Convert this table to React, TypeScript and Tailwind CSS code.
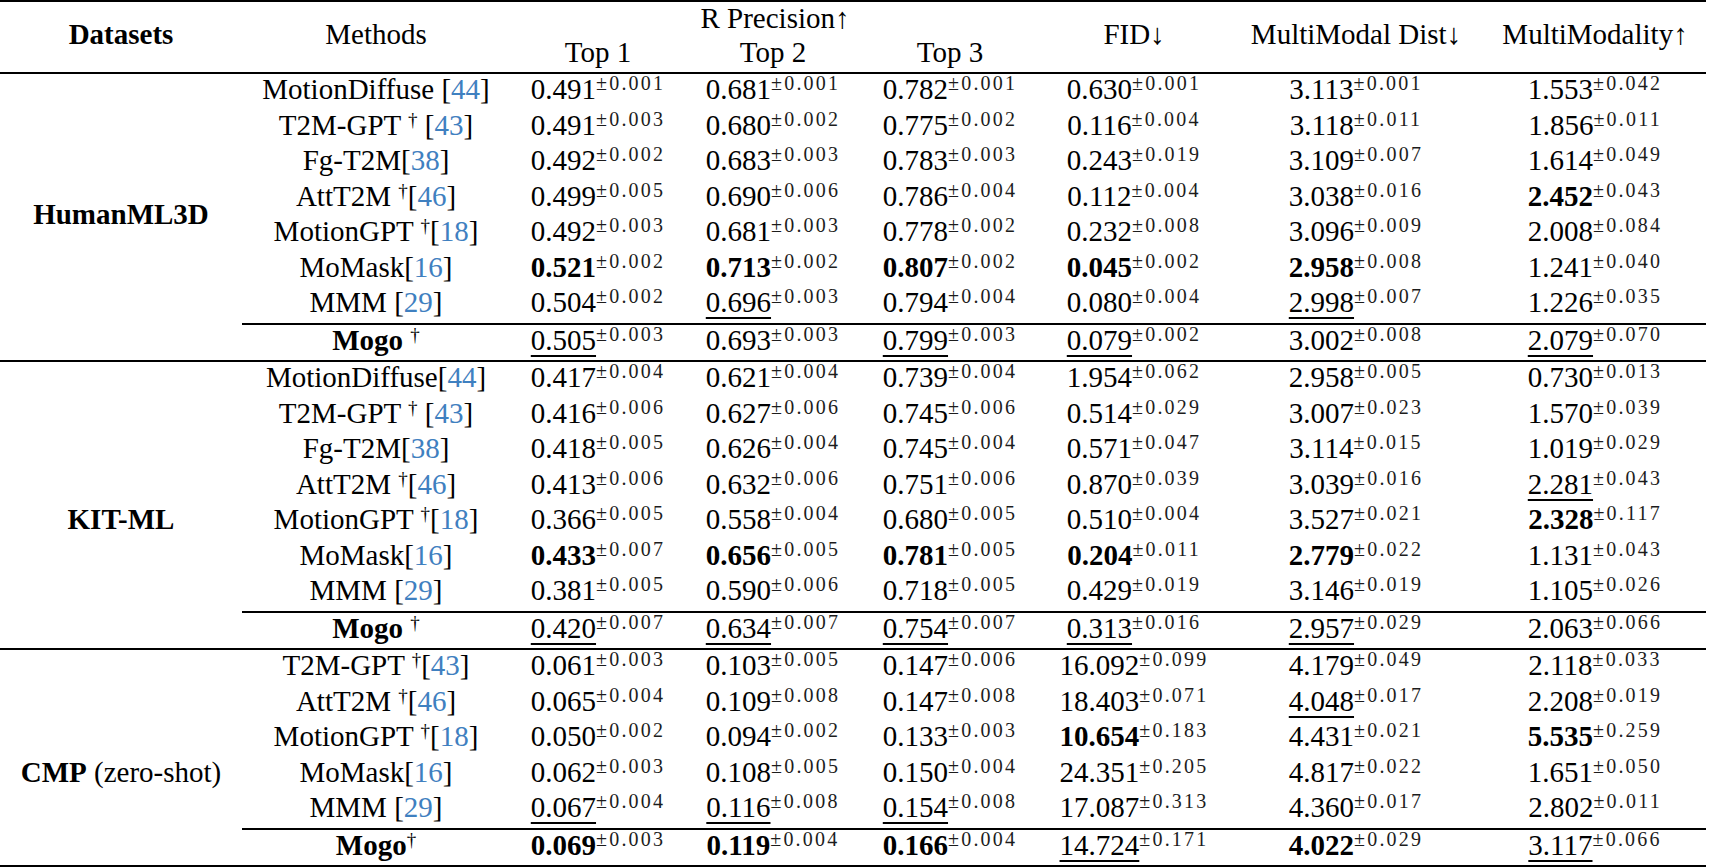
import clsx from "clsx";

// value strings: "main|std|style" where style is "" | "b" (bold) | "u" (underline)
type Row = { method: string; vals: string[]; mogo?: boolean };
type Section = { label: React.ReactNode; labelPad: string; rows: Row[] };

const SECTIONS: Section[] = [
  {
    label: <span className="font-bold">HumanML3D</span>,
    labelPad: "",
    rows: [
      { method: "MotionDiffuse [44]", vals: ["0.491|0.001", "0.681|0.001", "0.782|0.001", "0.630|0.001", "3.113|0.001", "1.553|0.042"] },
      { method: "T2M-GPT † [43]", vals: ["0.491|0.003", "0.680|0.002", "0.775|0.002", "0.116|0.004", "3.118|0.011", "1.856|0.011"] },
      { method: "Fg-T2M[38]", vals: ["0.492|0.002", "0.683|0.003", "0.783|0.003", "0.243|0.019", "3.109|0.007", "1.614|0.049"] },
      { method: "AttT2M †[46]", vals: ["0.499|0.005", "0.690|0.006", "0.786|0.004", "0.112|0.004", "3.038|0.016", "2.452|0.043|b"] },
      { method: "MotionGPT †[18]", vals: ["0.492|0.003", "0.681|0.003", "0.778|0.002", "0.232|0.008", "3.096|0.009", "2.008|0.084"] },
      { method: "MoMask[16]", vals: ["0.521|0.002|b", "0.713|0.002|b", "0.807|0.002|b", "0.045|0.002|b", "2.958|0.008|b", "1.241|0.040"] },
      { method: "MMM [29]", vals: ["0.504|0.002", "0.696|0.003|u", "0.794|0.004", "0.080|0.004", "2.998|0.007|u", "1.226|0.035"] },
      { method: "Mogo †", mogo: true, vals: ["0.505|0.003|u", "0.693|0.003", "0.799|0.003|u", "0.079|0.002|u", "3.002|0.008", "2.079|0.070|u"] },
    ],
  },
  {
    label: <span className="font-bold">KIT-ML</span>,
    labelPad: "pt-[35px]",
    rows: [
      { method: "MotionDiffuse[44]", vals: ["0.417|0.004", "0.621|0.004", "0.739|0.004", "1.954|0.062", "2.958|0.005", "0.730|0.013"] },
      { method: "T2M-GPT † [43]", vals: ["0.416|0.006", "0.627|0.006", "0.745|0.006", "0.514|0.029", "3.007|0.023", "1.570|0.039"] },
      { method: "Fg-T2M[38]", vals: ["0.418|0.005", "0.626|0.004", "0.745|0.004", "0.571|0.047", "3.114|0.015", "1.019|0.029"] },
      { method: "AttT2M †[46]", vals: ["0.413|0.006", "0.632|0.006", "0.751|0.006", "0.870|0.039", "3.039|0.016", "2.281|0.043|u"] },
      { method: "MotionGPT †[18]", vals: ["0.366|0.005", "0.558|0.004", "0.680|0.005", "0.510|0.004", "3.527|0.021", "2.328|0.117|b"] },
      { method: "MoMask[16]", vals: ["0.433|0.007|b", "0.656|0.005|b", "0.781|0.005|b", "0.204|0.011|b", "2.779|0.022|b", "1.131|0.043"] },
      { method: "MMM [29]", vals: ["0.381|0.005", "0.590|0.006", "0.718|0.005", "0.429|0.019", "3.146|0.019", "1.105|0.026"] },
      { method: "Mogo †", mogo: true, vals: ["0.420|0.007|u", "0.634|0.007|u", "0.754|0.007|u", "0.313|0.016|u", "2.957|0.029|u", "2.063|0.066"] },
    ],
  },
  {
    label: (
      <span>
        <span className="font-bold">CMP</span> (zero-shot)
      </span>
    ),
    labelPad: "pt-[35px]",
    rows: [
      { method: "T2M-GPT †[43]", vals: ["0.061|0.003", "0.103|0.005", "0.147|0.006", "16.092|0.099", "4.179|0.049", "2.118|0.033"] },
      { method: "AttT2M †[46]", vals: ["0.065|0.004", "0.109|0.008", "0.147|0.008", "18.403|0.071", "4.048|0.017|u", "2.208|0.019"] },
      { method: "MotionGPT †[18]", vals: ["0.050|0.002", "0.094|0.002", "0.133|0.003", "10.654|0.183|b", "4.431|0.021", "5.535|0.259|b"] },
      { method: "MoMask[16]", vals: ["0.062|0.003", "0.108|0.005", "0.150|0.004", "24.351|0.205", "4.817|0.022", "1.651|0.050"] },
      { method: "MMM [29]", vals: ["0.067|0.004|u", "0.116|0.008|u", "0.154|0.008|u", "17.087|0.313", "4.360|0.017", "2.802|0.011"] },
      { method: "Mogo†", mogo: true, vals: ["0.069|0.003|b", "0.119|0.004|b", "0.166|0.004|b", "14.724|0.171|u", "4.022|0.029|b", "3.117|0.066|u"] },
    ],
  },
];

const ROW_COLS = "grid grid-cols-[268px_176px_174px_180px_188px_256px_222px]";

const Val = ({ v }: { v: string }) => {
  const [main, sd, style] = v.split("|");
  return (
    <span className="whitespace-nowrap">
      <span
        className={clsx(
          style === "b" && "font-bold",
          style === "u" && "underline decoration-[1.5px] underline-offset-[5px]"
        )}
      >
        {main}
      </span>
      <span className="relative -top-[9px] text-[20px] tracking-[2.2px] text-[#1c1c1c]">±{sd}</span>
    </span>
  );
};

const Method = ({ text, bold }: { text: string; bold?: boolean }) => {
  const parts = text.split(/(†|\[\d+\])/).filter(Boolean);
  return (
    <span className="whitespace-pre">
      {parts.map((p, i) => {
        if (p === "†")
          return (
            <span key={i} className="relative -top-[9px] text-[19px]">
              †
            </span>
          );
        if (p.startsWith("["))
          return (
            <span key={i}>
              [<span className="text-[#3f80c0]">{p.slice(1, -1)}</span>]
            </span>
          );
        return (
          <span key={i} className={clsx(bold && "font-bold")}>
            {p}
          </span>
        );
      })}
    </span>
  );
};

const DataRow = ({ row }: { row: Row }) => (
  <div className={clsx(ROW_COLS, "h-[35.5px] pb-[5px] text-center leading-[30.5px]")}>
    <div>
      <Method text={row.method} bold={row.mogo} />
    </div>
    {row.vals.map((v, i) => (
      <div key={i}>
        <Val v={v} />
      </div>
    ))}
  </div>
);

export default function App() {
  return (
    <div className="w-[1706px] bg-white font-['Liberation_Serif','Times_New_Roman',serif] text-[29px] leading-normal text-black">
      {/* top rule */}
      <div className="h-[2px] bg-black" />
      <div className="flex h-[70px]">
        <div className="flex w-[242px] items-center justify-center font-bold pb-[4px]">Datasets</div>
        <div className="flex w-[268px] items-center justify-center pb-[4px]">Methods</div>
        <div className="flex w-[530px] flex-col">
          <div className="flex h-[34px] items-center justify-center">R Precision↑</div>
          <div className="h-[1.5px] bg-black" />
          <div className="flex flex-1 items-start text-center -mt-[5px]">
            <div className="w-[176px]">Top 1</div>
            <div className="w-[174px]">Top 2</div>
            <div className="w-[180px]">Top 3</div>
          </div>
        </div>
        <div className="flex w-[188px] items-center justify-center pb-[4px]">FID↓</div>
        <div className="flex w-[256px] items-center justify-center pb-[4px]">MultiModal Dist↓</div>
        <div className="flex w-[222px] items-center justify-center pb-[4px]">MultiModality↑</div>
      </div>
      <div className="h-[2px] bg-black" />
      {SECTIONS.map((s, si) => {
        const last = s.rows.length - 1;
        return (
          <div key={si}>
            <div className="flex">
              <div className={clsx("flex w-[242px] items-center justify-center pb-[5px]", s.labelPad)}>{s.label}</div>
              <div className="flex flex-col">
                {s.rows.slice(0, last).map((r, ri) => (
                  <DataRow key={ri} row={r} />
                ))}
                <div className="h-[2px] bg-black" />
                <DataRow row={s.rows[last]} />
              </div>
            </div>
            <div className="h-[2px] bg-black" />
          </div>
        );
      })}
    </div>
  );
}
